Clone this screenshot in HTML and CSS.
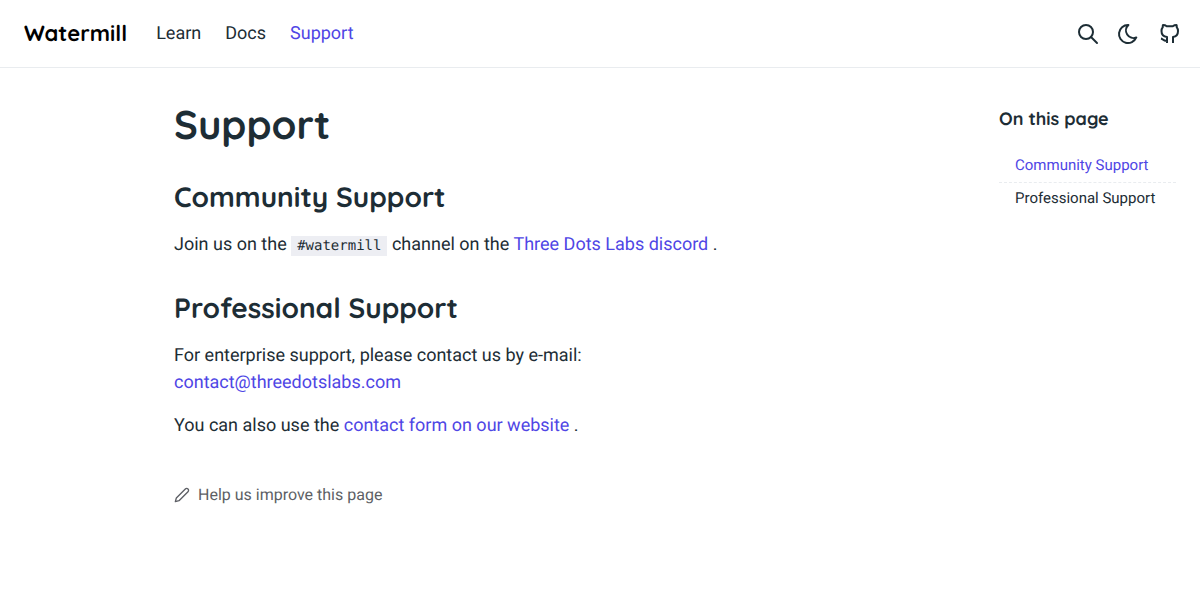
FILE: index.html
```html
<!DOCTYPE html>
<html lang="en">
<head>
<meta charset="utf-8">
<title>Support | Watermill</title>
<link rel="stylesheet" href="styles.css">
</head>
<body>
<header class="navbar">
  <a class="brand" href="#">Watermill</a>
  <nav class="menu">
    <a href="#">Learn</a>
    <a href="#">Docs</a>
    <a class="active" href="#" aria-current="page">Support</a>
  </nav>
  <div class="tools">
    <button type="button" aria-label="Search"><svg viewBox="0 0 24 24"><circle cx="10" cy="10" r="7"/><path d="M21 21l-6-6"/></svg></button>
    <button type="button" aria-label="Toggle theme"><svg viewBox="0 0 24 24"><path d="M12 3h.393a7.5 7.5 0 0 0 7.92 12.446A9 9 0 1 1 12 2.992z"/></svg></button>
    <a class="github" href="#" aria-label="GitHub"><svg viewBox="0 0 24 24"><path d="M9 21v-6c-3.500-.3-5.500-2.300-5.500-6 0-1.500.5-2.800 1.300-3.800-.2-.8-.1-1.500.2-2.200 1.400 0 2.700.4 3.700 1.200h6.100c1-.8 2.300-1.200 3.700-1.200.3.700.4 1.400.2 2.200.8 1 1.300 2.300 1.300 3.800 0 3.700-2 5.700-5 6v6M3 16.500c1.500.3 2 2.500 6 2.500" stroke-linecap="butt"/></svg></a>
  </div>
</header>
<div class="layout">
  <main class="content">
    <h1>Support</h1>
    <h2>Community Support</h2>
    <p>Join us on the <code>#watermill</code> channel on the <a href="#">Three Dots Labs discord</a> .</p>
    <h2>Professional Support</h2>
    <p>For enterprise support, please contact us by e-mail:<br><a href="#">contact@threedotslabs.com</a></p>
    <p>You can also use the <a href="#">contact form on our website</a> .</p>
    <a class="edit" href="#"><svg viewBox="0 0 24 24"><path d="M17 3a2.828 2.828 0 1 1 4 4L7.500 20.500 2 22l1.500-5.500L17 3z"/></svg>Help us improve this page</a>
  </main>
  <aside class="toc">
    <h3>On this page</h3>
    <ul>
      <li><a class="active" href="#">Community Support</a></li>
      <li><a href="#">Professional Support</a></li>
    </ul>
  </aside>
</div>
</body>
</html>
```
FILE: styles.css
```css
* { box-sizing: border-box; }
body { margin: 0; background: #fff; color: #1d2d35; font: 18px/27px Roboto, sans-serif; text-rendering: geometricPrecision; }
a { color: #4f46e5; text-decoration: none; }
svg { fill: none; stroke: currentColor; stroke-width: 2; stroke-linecap: round; stroke-linejoin: round; }
h1, h2, h3, .brand { font-family: Quicksand, Lato, sans-serif; font-weight: 700; }
.navbar { display: flex; align-items: center; height: 68px; padding: 0 18px 0 24px; border-bottom: 1px solid #e9ecef; }
.brand { color: #000; font-size: 22px; }
.menu { display: flex; gap: 24px; margin-left: 29px; }
.menu a { color: #1d2d35; }
.menu .active { color: #4f46e5; }
.tools { display: flex; gap: 16px; margin-left: auto; }
.tools button, .tools a { display: flex; padding: 0; border: 0; background: none; color: #1d2d35; }
.tools svg { width: 24px; height: 24px; }
.tools .github { margin-left: 2px; }
.layout { display: flex; justify-content: space-between; gap: 24px; padding: 32px 24px 0 174px; }
.content { flex: 0 1 650px; }
h1 { margin: 0 0 32px; font-size: 40px; line-height: 48px; }
h2 { margin: 0 0 17px; font-size: 28px; line-height: 34px; }
p { margin: 0 0 16px; }
p + h2 { margin-top: 33px; }
code { padding: 2px 6px; background: #edeef3; font: 14px "DejaVu Sans Mono", monospace; }
.edit { display: flex; align-items: center; gap: 8px; margin-top: 42px; color: #5d5f65; font-size: 16px; }
.edit svg { width: 16px; height: 16px; }
.toc { flex: 0 0 177px; padding-top: 6px; }
.toc h3 { margin: 0 0 18px; font-size: 18px; line-height: 26px; }
.toc ul { margin: 0; padding: 0; list-style: none; }
.toc li { padding: 3px 0 5px 16px; font-size: 15px; line-height: 24px; }
.toc li + li { border-top: 1px dashed #e9ecef; }
.toc a { color: #1d2d35; }
.toc .active { color: #4f46e5; }
```
